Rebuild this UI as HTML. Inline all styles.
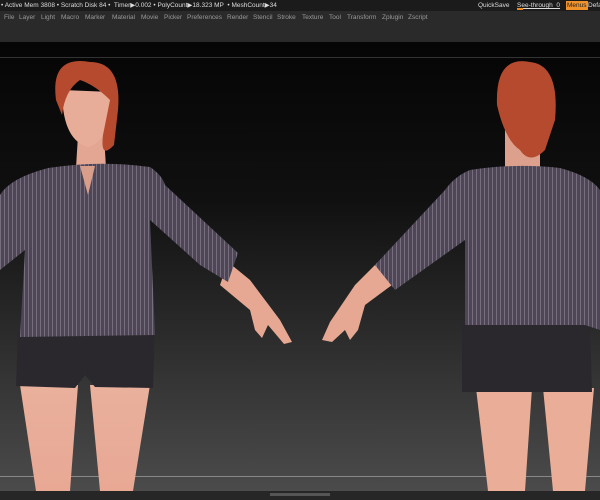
<!DOCTYPE html>
<html><head><style>
body{margin:0;width:600px;height:500px;overflow:hidden;background:#000;font-family:"Liberation Sans",sans-serif;}
#top{position:absolute;left:0;top:0;width:600px;height:11px;background:#1b1b1b;color:#ddd;font-size:6.5px;line-height:11px;white-space:nowrap}
#menu{position:absolute;left:0;top:11px;width:600px;height:31px;background:#2a2a2a;color:#999;font-size:6.5px}
#menu span{position:absolute;top:3px}
#vp{position:absolute;left:0;top:42px;width:600px;height:449px}
#bot{position:absolute;left:0;top:491px;width:600px;height:9px;background:#262626}
</style></head><body>
<div id="top"><span style="position:absolute;left:1px">• Active Mem 3808 • Scratch Disk 84 •&nbsp; Timer▶0.002 • PolyCount▶18.323 MP &nbsp;• MeshCount▶34</span>
<span style="position:absolute;left:478px">QuickSave</span>
<span style="position:absolute;left:517px;text-decoration:underline">See-through&nbsp; 0</span>
<span style="position:absolute;left:517px;top:8px;width:6px;height:2px;background:#e8891c"></span>
<span style="position:absolute;left:566px;top:1px;height:9px;line-height:9px;padding:0 1px;background:#f0932b;color:#222">Menus</span>
<span style="position:absolute;left:588px">Defa</span></div>
<div id="menu">
<span style="left:4px">File</span><span style="left:19px">Layer</span><span style="left:41px">Light</span><span style="left:61px">Macro</span><span style="left:85px">Marker</span><span style="left:112px">Material</span><span style="left:141px">Movie</span><span style="left:164px">Picker</span><span style="left:187px">Preferences</span><span style="left:227px">Render</span><span style="left:253px">Stencil</span><span style="left:277px">Stroke</span><span style="left:302px">Texture</span><span style="left:329px">Tool</span><span style="left:347px">Transform</span><span style="left:382px">Zplugin</span><span style="left:408px">Zscript</span>
</div>
<svg id="vp" width="600" height="449" viewBox="0 42 600 449">
<defs>
<linearGradient id="bg" x1="0" y1="0" x2="0" y2="1"><stop offset="0" stop-color="#050505"/><stop offset="0.35" stop-color="#101010"/><stop offset="1" stop-color="#4b4b4b"/></linearGradient>
<pattern id="st" width="4" height="4" patternUnits="userSpaceOnUse"><rect width="4" height="4" fill="#4e4656"/><rect width="1" height="4" fill="#766e7c"/></pattern>
<linearGradient id="sk" x1="0" y1="0" x2="0" y2="1"><stop offset="0" stop-color="#e9b09c"/><stop offset="1" stop-color="#e8a894"/></linearGradient>
</defs>
<rect x="0" y="42" width="600" height="449" fill="url(#bg)"/>
<rect x="0" y="57" width="600" height="1" fill="#333"/>
<rect x="0" y="476" width="600" height="1" fill="#888"/>
<!-- left figure -->
<path d="M20 385 L78 385 L70 491 L36 491Z" fill="url(#sk)"/>
<path d="M90 385 L150 385 L133 491 L100 491Z" fill="url(#sk)"/>
<path d="M18 332 L155 330 L153 388 L95 387 L85 375 L75 388 L16 386Z" fill="#2b282d"/>
<path d="M228 262 L250 280 L280 320 L292 342 L284 344 L268 325 L262 338 L255 330 L250 310 L220 285Z" fill="#e6a892"/>
<path d="M78 135 L104 135 L106 168 L76 168Z" fill="#e3a693"/>
<path d="M62 90 Q62 140 88 147 Q112 140 112 92 Z" fill="#e8ad98"/>
<path d="M56 100 Q50 55 90 62 Q122 62 118 110 L114 145 Q100 160 103 135 L110 100 Q95 85 80 80 Q65 90 62 115Z" fill="#b54a2e"/>
<path d="M48 168 Q100 160 150 167 Q162 175 165 185 L238 253 L228 282 L200 265 L150 220 L155 335 L20 337 L25 250 L0 270 L0 195 Q10 178 48 168Z" fill="url(#st)"/>
<path d="M80 166 L88 195 L95 166Z" fill="#d89e8a"/>
<!-- right figure -->
<path d="M476 388 L532 388 L525 491 L488 491Z" fill="#e9ad98"/>
<path d="M543 388 L594 388 L585 491 L553 491Z" fill="#e9ad98"/>
<path d="M462 322 L590 322 L592 392 L462 392Z" fill="#2b282d"/>
<path d="M378 262 L355 285 L330 322 L322 340 L332 342 L345 330 L350 340 L358 330 L365 305 L392 285Z" fill="#e6a892"/>
<path d="M505 130 L540 130 L540 168 L505 168Z" fill="#dca08d"/>
<path d="M497 105 Q495 55 530 62 Q560 65 555 120 L545 150 Q530 165 520 150 Q505 140 497 105Z" fill="#b54a2e"/>
<path d="M470 170 Q515 163 560 168 Q590 176 600 190 L600 330 L585 325 L465 325 L465 240 L395 290 L375 265 L445 190 Q455 176 470 170Z" fill="url(#st)"/>
</svg>
<div id="bot"><div style="position:absolute;left:270px;top:2px;width:60px;height:3px;background:#555"></div></div>
</body></html>
